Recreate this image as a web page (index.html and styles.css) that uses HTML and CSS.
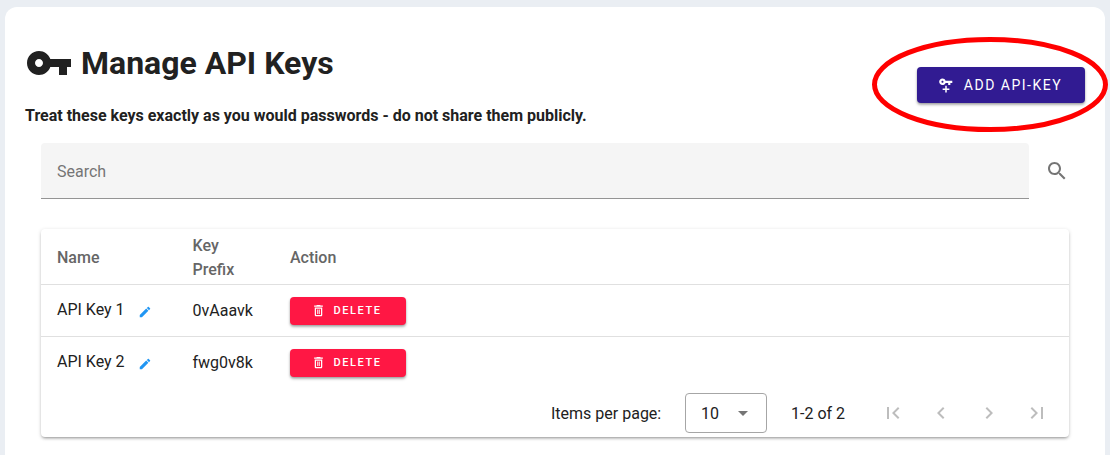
FILE: index.html
```html
<!DOCTYPE html>
<html lang="en">
<head>
<meta charset="utf-8">
<title>Manage API Keys</title>
<link rel="stylesheet" href="styles.css">
</head>
<body>
<main class="card">
  <header class="head">
    <div class="head-text">
      <h1 class="title">
        <svg class="title-icon" viewBox="0 0 24 24"><path d="M12.65 10C11.83 7.67 9.61 6 7 6c-3.31 0-6 2.69-6 6s2.69 6 6 6c2.61 0 4.83-1.67 5.65-4H17v4h4v-4h2v-4H12.65zM7 14c-1.1 0-2-.9-2-2s.9-2 2-2 2 .9 2 2-.9 2-2 2z"/></svg>
        <span>Manage API Keys</span>
      </h1>
      <p class="subtitle">Treat these keys exactly as you would passwords - do not share them publicly.</p>
    </div>
    <button class="btn btn-add">
      <svg class="btn-add-icon" viewBox="0 0 24 24"><path d="M12.6 9.5C12 7.8 10.4 6.6 8.5 6.6c-2.400 0-4.400 2-4.400 4.400s2 4.400 4.400 4.400c1.900 0 3.500-1.200 4.100-2.900h3.500v2.900h2.900v-2.900h2.600V9.500H12.600zM8.500 12.400c-.8 0-1.400-.6-1.400-1.400s.6-1.400 1.400-1.400 1.400.6 1.400 1.400-.6 1.400-1.400 1.400z" transform="translate(-1.200 -3.300)"/><path d="M11 13h2v3.500h3.500v2H13V22h-2v-3.500H7.500v-2H11z"/></svg>
      <span>ADD API-KEY</span>
    </button>
  </header>

  <div class="search-row">
    <div class="search-field">Search</div>
    <svg class="search-icon" viewBox="0 0 24 24"><path d="M15.500 14h-.79l-.28-.27C15.410 12.590 16 11.110 16 9.500 16 5.910 13.090 3 9.500 3S3 5.910 3 9.500 5.910 16 9.500 16c1.610 0 3.090-.59 4.230-1.570l.27.28v.79l5 4.990L20.490 19l-4.990-5zm-6 0C7.010 14 5 11.990 5 9.500S7.010 5 9.500 5 14 7.010 14 9.500 11.990 14 9.500 14z"/></svg>
  </div>

  <section class="table-card">
    <div class="row row-head">
      <div class="col-name">Name</div>
      <div class="col-prefix">Key<br>Prefix</div>
      <div class="col-action">Action</div>
    </div>
    <div class="row">
      <div class="col-name"><span class="key-name">API Key 1</span>
        <svg class="edit-icon" viewBox="0 0 24 24"><path d="M3 17.250V21h3.750L17.810 9.940l-3.750-3.750L3 17.250zM20.710 7.040c.39-.39.39-1.020 0-1.410l-2.340-2.340c-.39-.39-1.020-.39-1.410 0l-1.830 1.830 3.750 3.750 1.830-1.830z"/></svg>
      </div>
      <div class="col-prefix">0vAaavk</div>
      <div class="col-action">
        <button class="btn btn-delete">
          <svg class="delete-icon" viewBox="0 0 24 24"><path d="M6 19c0 1.100.9 2 2 2h8c1.100 0 2-.9 2-2V7H6v12zm2-10h8v10H8V9zm7.500-5l-1-1h-5l-1 1H5v2h14V4h-3.500zM10 10.500h1.500v7H10zM12.500 10.500H14v7h-1.500z"/></svg>
          <span>DELETE</span>
        </button>
      </div>
    </div>
    <div class="row row-last">
      <div class="col-name"><span class="key-name">API Key 2</span>
        <svg class="edit-icon" viewBox="0 0 24 24"><path d="M3 17.250V21h3.750L17.810 9.940l-3.750-3.750L3 17.250zM20.710 7.040c.39-.39.39-1.020 0-1.410l-2.340-2.340c-.39-.39-1.020-.39-1.410 0l-1.830 1.830 3.750 3.750 1.830-1.830z"/></svg>
      </div>
      <div class="col-prefix">fwg0v8k</div>
      <div class="col-action">
        <button class="btn btn-delete">
          <svg class="delete-icon" viewBox="0 0 24 24"><path d="M6 19c0 1.100.9 2 2 2h8c1.100 0 2-.9 2-2V7H6v12zm2-10h8v10H8V9zm7.500-5l-1-1h-5l-1 1H5v2h14V4h-3.500zM10 10.500h1.500v7H10zM12.500 10.500H14v7h-1.500z"/></svg>
          <span>DELETE</span>
        </button>
      </div>
    </div>
    <div class="pager">
      <span class="pager-label">Items per page:</span>
      <div class="pager-select"><span>10</span><i class="caret"></i></div>
      <span class="pager-range">1-2 of 2</span>
      <div class="pager-nav">
        <svg viewBox="0 0 24 24"><path d="M18.410 16.590L13.820 12l4.590-4.590L17 6l-6 6 6 6zM6 6h2v12H6z"/></svg>
        <svg viewBox="0 0 24 24"><path d="M15.410 7.410L14 6l-6 6 6 6 1.410-1.410L10.830 12z"/></svg>
        <svg viewBox="0 0 24 24"><path d="M10 6L8.590 7.410 13.170 12l-4.580 4.590L10 18l6-6z"/></svg>
        <svg viewBox="0 0 24 24"><path d="M5.590 7.410L10.180 12l-4.590 4.590L7 18l6-6-6-6zM16 6h2v12h-2z"/></svg>
      </div>
    </div>
  </section>
</main>
<svg class="annotation" viewBox="0 0 1110 455"><ellipse cx="990" cy="84.500" rx="115.500" ry="45" /></svg>
</body>
</html>
```

FILE: styles.css
```css
* { box-sizing: border-box; }
html, body { height: 100%; }
body {
  margin: 0;
  background: #eaeef3;
  font-family: Roboto, "Liberation Sans", sans-serif;
  color: #212121;
  overflow: hidden;
}
.card {
  margin: 7px 5px 0;
  height: 470px;
  padding: 36px 20px 0 20px;
  background: #fff;
  border-radius: 12px 12px 0 0;
}
.head {
  display: flex;
  justify-content: space-between;
  align-items: flex-start;
  height: 100px;
}
.title {
  margin: 0;
  display: flex;
  align-items: center;
  font-size: 32px;
  line-height: 40px;
  font-weight: 700;
}
.title-icon {
  width: 48px;
  height: 48px;
  margin: -4px 8px -4px 0;
  fill: #212121;
}
.subtitle {
  margin: 23px 0 0;
  font-size: 16px;
  line-height: 20px;
  font-weight: 700;
}
.btn {
  display: inline-flex;
  align-items: center;
  justify-content: center;
  border: 0;
  color: #fff;
  font-family: inherit;
  text-transform: uppercase;
  box-shadow: 0 2px 3px rgba(0,0,0,.28), 0 1px 2px rgba(0,0,0,.14);
}
.btn-add {
  width: 168px;
  height: 36px;
  margin: 24px 0 0;
  padding: 0 3px 0 0;
  background: #311b92;
  border-radius: 4px;
  font-size: 14px;
  font-weight: 400;
  letter-spacing: 1.500px;
}
.btn-add-icon { width: 18px; height: 18px; margin-right: 9px; fill: #fff; }
.search-row {
  display: flex;
  align-items: center;
  margin-left: 16px;
}
.search-field {
  width: 988px;
  height: 56px;
  padding: 0 16px;
  line-height: 57px;
  background: #f5f5f5;
  border-bottom: 1px solid #949494;
  border-radius: 4px 4px 0 0;
  color: #757575;
  font-size: 16px;
}
.search-icon { width: 24px; height: 24px; margin-left: 16px; fill: #757575; }
.table-card {
  width: 1028px;
  margin: 30px 0 0 16px;
  border-radius: 4px;
  box-shadow: 0 2px 3px -1px rgba(0,0,0,.35), 0 1px 4px rgba(0,0,0,.14);
  background: #fff;
  font-size: 16px;
}
.row {
  display: flex;
  align-items: center;
  height: 52px;
  border-bottom: 1px solid #e0e0e0;
  padding-left: 16px;
}
.row-last { border-bottom-color: transparent; }
.row-head {
  height: 56px;
  padding-top: 2px;
  color: #666;
  font-weight: 500;
  line-height: 24px;
}
.col-name { width: 135.500px; display: flex; align-items: center; }
.col-prefix { width: 97.500px; }
.key-name { margin-right: 13px; margin-top: -2px; }
.edit-icon { width: 14px; height: 14px; margin-top: 2px; fill: #2196f3; }
.btn-delete {
  width: 116px;
  height: 28px;
  padding: 0 3px 0 0;
  background: #ff1744;
  border-radius: 4px;
  font-size: 11px;
  font-weight: 500;
  letter-spacing: 1.600px;
}
.delete-icon { width: 15px; height: 15px; margin-right: 7px; fill: #fff; }
.pager {
  display: flex;
  align-items: center;
  height: 48px;
  padding-left: 510px;
}
.pager-label { width: 134px; }
.pager-select {
  display: flex;
  align-items: center;
  justify-content: space-between;
  width: 82px;
  height: 40px;
  padding: 0 18px 0 15px;
  border: 1px solid #a6a6a6;
  border-radius: 4px;
}
.caret {
  width: 0;
  height: 0;
  border-left: 5px solid transparent;
  border-right: 5px solid transparent;
  border-top: 5px solid #757575;
}
.pager-range { margin-left: 24px; width: 76px; }
.pager-nav { display: flex; gap: 24px; margin-left: 14px; }
.pager-nav svg { width: 24px; height: 24px; fill: #bdbdbd; }
.annotation {
  position: absolute;
  left: 0;
  top: 0;
  width: 1110px;
  height: 455px;
  pointer-events: none;
}
.annotation ellipse { fill: none; stroke: #f00; stroke-width: 5; }
```
